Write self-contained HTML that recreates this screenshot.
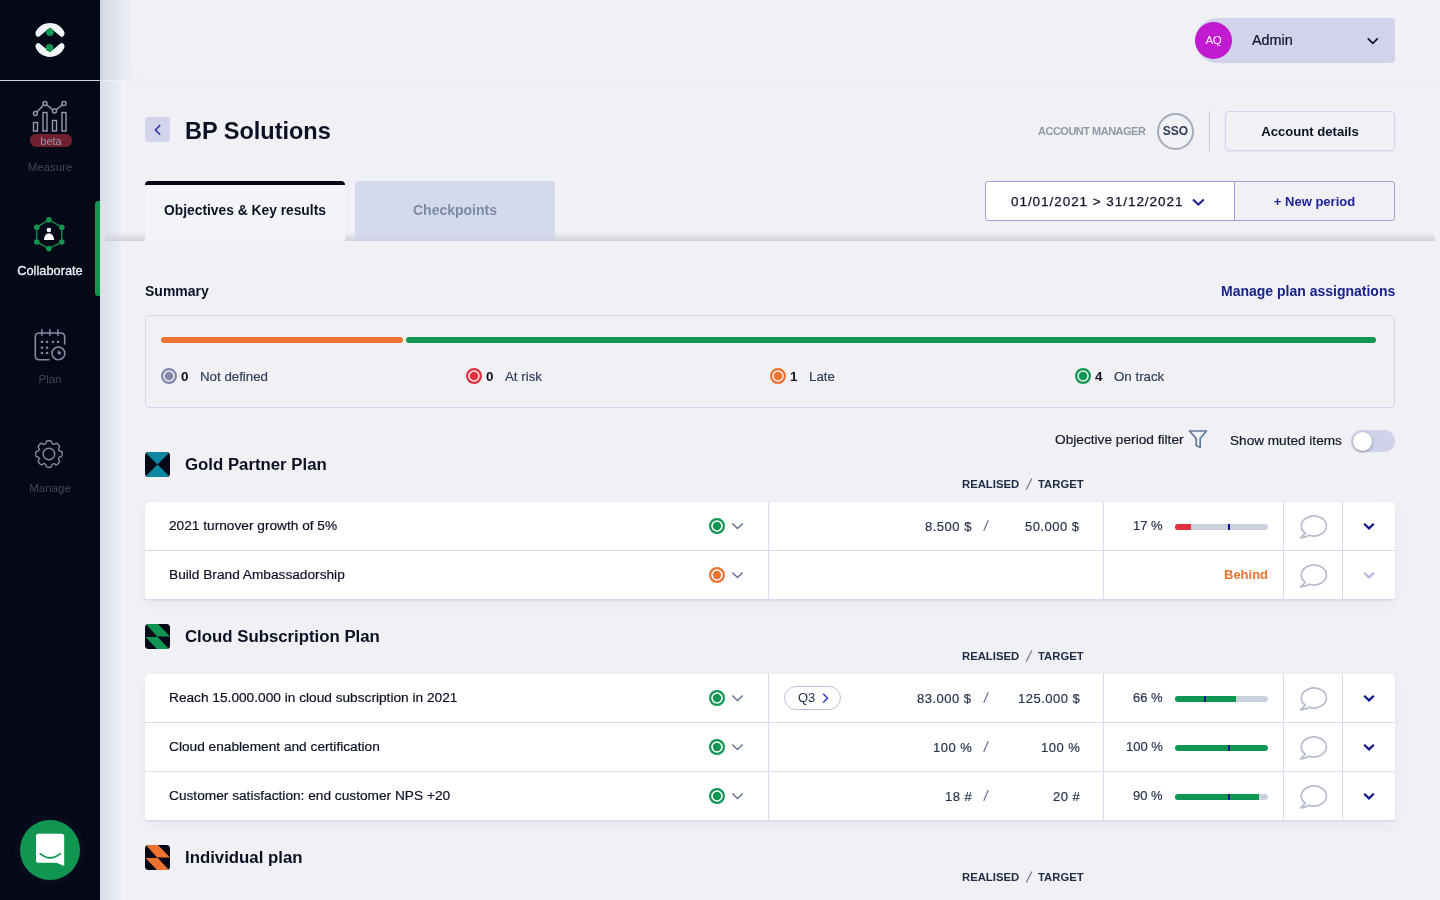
<!DOCTYPE html>
<html><head><meta charset="utf-8"><title>BP Solutions</title>
<style>
*{box-sizing:border-box;margin:0;padding:0}
html,body{width:1440px;height:900px;overflow:hidden;background:#f0f0f5;font-family:"Liberation Sans",sans-serif;color:#0b1024;-webkit-font-smoothing:antialiased}
.a,.navl{will-change:transform}
.a{position:absolute;white-space:nowrap;line-height:1}
#side{position:absolute;left:0;top:0;width:100px;height:900px;background:#050817}
#sideline{position:absolute;left:0;top:80px;width:100px;height:1px;background:#d2d0e6}
.navl{position:absolute;left:0;width:100px;text-align:center;font-size:11.5px;color:#42465e;line-height:1}
.m{-webkit-text-stroke:0.25px currentColor}
#lshadow{position:absolute;left:100px;top:81px;width:22px;height:819px;background:linear-gradient(to right,#d9dfe8 0,#dde2eb 4px,#e2e6ef 12px,#eaecf3 18px,#f0f0f5 22px)}
#lshadow2{position:absolute;left:100px;top:0;width:32px;height:80px;background:linear-gradient(to right,#cdd4e1 0,#d4dae4 3px,#dbe0e9 10px,#e2e6ee 18px,#e8ebf2 24px,#f0f0f5 32px)}
.box{position:absolute}
</style></head><body>
<div id="lshadow"></div><div id="lshadow2"></div>
<div id="side">
  <svg class="box" style="left:0;top:0" width="100" height="80" viewBox="0 0 100 80">
    <path d="M35.6 32.5 C37.5 27 43 22.9 50 22.9 C57 22.9 62.5 27 64.4 32.5 C65 34.5 63.5 36.8 61.7 36.8 C60.7 36.8 59.9 36 59.25 35.2 L50 27.8 L40.75 35.2 C40.1 36 39.3 36.8 38.3 36.8 C36.5 36.8 35 34.5 35.6 32.5 Z" fill="#f2f5f7"/>
    <path d="M35.6 32.5 C37.5 27 43 22.9 50 22.9 C57 22.9 62.5 27 64.4 32.5 C65 34.5 63.5 36.8 61.7 36.8 C60.7 36.8 59.9 36 59.25 35.2 L50 27.8 L40.75 35.2 C40.1 36 39.3 36.8 38.3 36.8 C36.5 36.8 35 34.5 35.6 32.5 Z" fill="#f2f5f7" transform="translate(0,79.8) scale(1,-1)"/>
    <circle cx="49.9" cy="32.2" r="3.8" fill="#119650"/>
    <circle cx="49.6" cy="47.7" r="3.8" fill="#119650"/>
  </svg>
  <div id="sideline"></div>
  <!-- Measure -->
  <svg class="box" style="left:0;top:95px" width="100" height="60" viewBox="0 95 100 60">
    <g fill="none" stroke="#9799ad" stroke-width="1.4">
      <rect x="33.5" y="122.5" width="4" height="8.5"/>
      <rect x="43" y="112.5" width="4" height="18.5"/>
      <rect x="52.5" y="120.5" width="4" height="10.5"/>
      <rect x="62" y="112.5" width="4" height="18.5"/>
      <polyline points="35.5,113.5 45,103.5 54.5,111 64,103.5"/>
      <circle cx="35.5" cy="113.5" r="2" fill="#050817"/>
      <circle cx="45" cy="103.5" r="2" fill="#050817"/>
      <circle cx="54.5" cy="111" r="2" fill="#050817"/>
      <circle cx="64" cy="103.5" r="2" fill="#050817"/>
    </g>
  </svg>
  <div class="box" style="left:29.8px;top:134.4px;width:42px;height:12.4px;border-radius:6.2px;background:#71202f"></div>
  <div class="a" style="left:1px;width:100px;text-align:center;top:136px;font-size:11px;color:#9498b0">beta</div>
  <div class="navl" style="top:162px">Measure</div>
  <!-- Collaborate -->
  <svg class="box" style="left:0;top:210px" width="100" height="50" viewBox="0 210 100 50">
    <polygon points="48.9,219.8 61.8,227.2 61.8,242 48.9,248.6 36.8,242 36.8,227.2" fill="none" stroke="#119650" stroke-width="1.3"/>
    <g fill="#119650">
      <circle cx="48.9" cy="219.8" r="2.8"/><circle cx="61.8" cy="227.2" r="2.8"/><circle cx="61.8" cy="242" r="2.8"/>
      <circle cx="48.9" cy="248.6" r="2.8"/><circle cx="36.8" cy="242" r="2.8"/><circle cx="36.8" cy="227.2" r="2.8"/>
    </g>
    <circle cx="48.9" cy="230" r="2.3" fill="#fff"/>
    <path d="M43.9 240 Q44.5 233.3 48.9 233.3 Q53.4 233.3 54.2 240 Z" fill="#fff"/>
  </svg>
  <div class="navl" style="top:265px;font-size:12.8px;color:#f0f1f5;-webkit-text-stroke:0.3px #f0f1f5">Collaborate</div>
  <div class="box" style="left:95px;top:201px;width:5px;height:95px;background:#119650;border-radius:3px 0 0 3px"></div>
  <!-- Plan -->
  <svg class="box" style="left:0;top:320px" width="100" height="50" viewBox="0 320 100 50">
    <g fill="none" stroke="#868aa2" stroke-width="1.6" stroke-linecap="round">
      <path d="M49 359.7 H39.3 Q35.3 359.7 35.3 355.7 V337 Q35.3 333 39.3 333 H60.7 Q64.7 333 64.7 337 V344"/>
      <line x1="41.9" y1="329.8" x2="41.9" y2="335.3"/>
      <line x1="49.9" y1="329.8" x2="49.9" y2="335.3"/>
      <line x1="58" y1="329.8" x2="58" y2="335.3"/>
      <circle cx="58.4" cy="353.4" r="6.4"/>
    </g>
    <g fill="#868aa2">
      <rect x="40.8" y="340.8" width="2.2" height="2.2"/><rect x="46" y="340.8" width="2.2" height="2.2"/><rect x="51.8" y="340.8" width="2.2" height="2.2"/><rect x="56.9" y="340.8" width="2.2" height="2.2"/>
      <rect x="40.8" y="346.6" width="2.2" height="2.2"/><rect x="46" y="346.6" width="2.2" height="2.2"/>
      <rect x="40.8" y="351.9" width="2.2" height="2.2"/><rect x="46" y="351.9" width="2.2" height="2.2"/>
      <path d="M57.6 350.7 A3.6 3.6 0 0 1 61.2 354.3 H57.6 Z"/>
    </g>
  </svg>
  <div class="navl" style="top:374px">Plan</div>
  <!-- Manage -->
  <svg class="box" style="left:20px;top:425px" width="60" height="60" viewBox="0 0 60 60">
    <g transform="translate(28.9,29)" fill="none" stroke="#868aa2" stroke-width="1.4" stroke-linejoin="round">
      <path d="M-3.96 -9.79 Q-3.13 -10.13 -2.97 -11.00 L-2.81 -11.83 Q-2.55 -13.26 -1.10 -13.26 L1.10 -13.26 Q2.55 -13.26 2.81 -11.83 L2.97 -11.00 Q3.13 -10.13 3.96 -9.79 L4.12 -9.72 Q4.95 -9.38 5.68 -9.88 L6.38 -10.36 Q7.57 -11.18 8.59 -10.15 L10.15 -8.59 Q11.18 -7.57 10.36 -6.38 L9.88 -5.68 Q9.38 -4.95 9.72 -4.12 L9.79 -3.96 Q10.13 -3.13 11.00 -2.97 L11.83 -2.81 Q13.26 -2.55 13.26 -1.10 L13.26 1.10 Q13.26 2.55 11.83 2.81 L11.00 2.97 Q10.13 3.13 9.79 3.96 L9.72 4.12 Q9.38 4.95 9.88 5.68 L10.36 6.38 Q11.18 7.57 10.15 8.59 L8.59 10.15 Q7.57 11.18 6.38 10.36 L5.68 9.88 Q4.95 9.38 4.12 9.72 L3.96 9.79 Q3.13 10.13 2.97 11.00 L2.81 11.83 Q2.55 13.26 1.10 13.26 L-1.10 13.26 Q-2.55 13.26 -2.81 11.83 L-2.97 11.00 Q-3.13 10.13 -3.96 9.79 L-4.12 9.72 Q-4.95 9.38 -5.68 9.88 L-6.38 10.36 Q-7.57 11.18 -8.59 10.15 L-10.15 8.59 Q-11.18 7.57 -10.36 6.38 L-9.88 5.68 Q-9.38 4.95 -9.72 4.12 L-9.79 3.96 Q-10.13 3.13 -11.00 2.97 L-11.83 2.81 Q-13.26 2.55 -13.26 1.10 L-13.26 -1.10 Q-13.26 -2.55 -11.83 -2.81 L-11.00 -2.97 Q-10.13 -3.13 -9.79 -3.96 L-9.72 -4.12 Q-9.38 -4.95 -9.88 -5.68 L-10.36 -6.38 Q-11.18 -7.57 -10.15 -8.59 L-8.59 -10.15 Q-7.57 -11.18 -6.38 -10.36 L-5.68 -9.88 Q-4.95 -9.38 -4.12 -9.72 Z"/>
      <circle r="5.8"/>
    </g>
  </svg>
  <div class="navl" style="top:483px">Manage</div>
  <!-- chat button -->
  <div class="box" style="left:14px;top:814px;width:72px;height:72px;border-radius:50%;background:radial-gradient(circle,#0a0d1e 60%,#050817 72%)"></div>
  <div class="box" style="left:20px;top:820px;width:60px;height:60px;border-radius:50%;background:#109651"></div>
  <svg class="box" style="left:20px;top:820px" width="60" height="60" viewBox="20 820 60 60">
    <path d="M38.5 833.8 H61.7 Q64.2 833.8 64.2 836.3 V866 L56.5 862.8 H38.5 Q36 862.8 36 860.3 V836.3 Q36 833.8 38.5 833.8Z" fill="#fff"/>
    <path d="M40.3 853.6 Q50.2 862 60.2 853.6" fill="none" stroke="#109651" stroke-width="1.8" stroke-linecap="round"/>
  </svg>
</div>

<!-- top header -->
<div class="box" style="left:128px;top:-12px;width:1330px;height:92px;border-radius:14px;box-shadow:-1px 1px 3px rgba(205,218,235,.55) inset"></div>
<div class="box" style="left:128px;top:80px;width:1312px;height:1px;background:#eaecf2"></div>
<div class="box" style="left:1195px;top:18px;width:200px;height:45px;background:#d2d3eb;border-radius:22.5px 4px 4px 22.5px"></div>
<div class="box" style="left:1195px;top:22px;width:37px;height:37px;border-radius:50%;background:#c11ad0"></div>
<div class="a" style="left:1195px;width:37px;text-align:center;top:35px;font-size:11.5px;color:#fff;letter-spacing:-0.2px">AQ</div>
<div class="a" style="left:1252px;top:33.2px;font-size:14.4px;color:#0b1024;-webkit-text-stroke:0.2px #0b1024">Admin</div>
<svg class="box" style="left:1365px;top:35px" width="16" height="12" viewBox="0 0 16 12"><path d="M2.8 3.3 L7.8 8.4 L12.8 3.3" fill="none" stroke="#0b1024" stroke-width="1.7"/></svg>

<!-- title row -->
<div class="box" style="left:145px;top:117px;width:25px;height:25px;background:#d3d4ec;border-radius:3px"></div>
<svg class="box" style="left:145px;top:117px" width="25" height="25" viewBox="0 0 25 25"><path d="M15.2 8.1 L10.4 12.9 L15.2 17.7" fill="none" stroke="#2b35b5" stroke-width="1.5"/></svg>
<div class="a" style="left:185px;top:120.1px;font-size:23.5px;font-weight:700;color:#0b1024">BP Solutions</div>
<div class="a" style="left:1038px;top:125.6px;font-size:11px;color:#8f98aa;letter-spacing:-0.5px;font-weight:700">ACCOUNT MANAGER</div>
<div class="box" style="left:1157px;top:113px;width:37px;height:37px;border-radius:50%;border:2px solid #a3acbd"></div>
<div class="a" style="left:1157px;width:37px;text-align:center;top:125.4px;font-size:12px;font-weight:700;color:#2c3a58">SSO</div>
<div class="box" style="left:1209px;top:111px;width:1px;height:40px;background:#c9ccd6"></div>
<div class="box" style="left:1225px;top:111px;width:170px;height:40px;border:1px solid #d0d3ee;border-radius:4px;box-shadow:0 1px 2px rgba(20,20,60,.06)"></div>
<div class="a" style="left:1225px;width:170px;text-align:center;top:125.2px;font-size:13.1px;font-weight:700;color:#0b1024">Account details</div>

<!-- tabs -->
<div class="box" style="left:105px;top:232px;width:1330px;height:9px;background:linear-gradient(to bottom,rgba(200,200,210,0),rgba(205,205,214,.9))"></div>
<div class="box" style="left:145px;top:181px;width:200px;height:60px;background:#f3f4f8;border-top:4px solid #050817;border-radius:4px 4px 0 0"></div>
<div class="a" style="left:145px;width:200px;text-align:center;top:204.4px;font-size:13.8px;font-weight:700;color:#0b1024">Objectives &amp; Key results</div>
<div class="box" style="left:355px;top:181px;width:200px;height:60px;background:#d5d9ec;border-radius:4px 4px 0 0"></div>
<div class="box" style="left:355px;top:234px;width:200px;height:7px;background:linear-gradient(to bottom,rgba(200,200,230,0),rgba(205,205,235,.8))"></div>
<div class="a" style="left:355px;width:200px;text-align:center;top:203.2px;font-size:14px;font-weight:700;color:#7b8ba5">Checkpoints</div>

<div class="box" style="left:985px;top:181px;width:250px;height:40px;background:#fff;border:1px solid #9fa3d6;border-radius:3px 0 0 3px"></div>
<div class="a" style="left:1011px;top:194.8px;font-size:13.5px;color:#0f1429;letter-spacing:0.95px;-webkit-text-stroke:0.25px #0f1429">01/01/2021 &gt; 31/12/2021</div>
<svg class="box" style="left:1190px;top:196px" width="16" height="12" viewBox="0 0 16 12"><path d="M3 3.5 L8.4 8.6 L13.8 3.5" fill="none" stroke="#1d1f99" stroke-width="2.1"/></svg>
<div class="box" style="left:1234px;top:181px;width:161px;height:40px;border:1px solid #9fa3d6;border-radius:0 3px 3px 0"></div>
<div class="a" style="left:1234px;width:161px;text-align:center;top:195.2px;font-size:13px;font-weight:700;color:#1d2399">+ New period</div>

<!-- summary -->
<div class="a" style="left:145px;top:284.2px;font-size:14px;font-weight:700;color:#0b1024">Summary</div>
<div class="a" style="right:45px;top:284.2px;font-size:14px;font-weight:700;color:#1a2190">Manage plan assignations</div>
<div class="box" style="left:145px;top:315px;width:1250px;height:93px;border:1px solid #d3d6ec;border-radius:4px"></div>
<div class="box" style="left:161px;top:337px;width:242px;height:6px;background:#ee7330;border-radius:3px"></div>
<div class="box" style="left:406px;top:337px;width:970px;height:6px;background:#109651;border-radius:3px"></div>
<svg class="box" style="left:161px;top:368px" width="16" height="16" viewBox="0 0 16 16"><circle cx="8" cy="8" r="6.9" fill="none" stroke="#8486a8" stroke-width="2.2"/><circle cx="8" cy="8" r="4.3" fill="#8486a8"/></svg>
<div class="a" style="left:181px;top:369.8px;font-size:13.4px;font-weight:700;color:#0b1024">0</div>
<div class="a" style="left:200px;top:369.8px;font-size:13.3px;color:#2f3e5c;-webkit-text-stroke:0.2px #2f3e5c">Not defined</div>
<svg class="box" style="left:466px;top:368px" width="16" height="16" viewBox="0 0 16 16"><circle cx="8" cy="8" r="6.9" fill="none" stroke="#e3303f" stroke-width="2.2"/><circle cx="8" cy="8" r="4.3" fill="#e3303f"/></svg>
<div class="a" style="left:486px;top:369.8px;font-size:13.4px;font-weight:700;color:#0b1024">0</div>
<div class="a" style="left:505px;top:369.8px;font-size:13.3px;color:#2f3e5c;-webkit-text-stroke:0.2px #2f3e5c">At risk</div>
<svg class="box" style="left:770px;top:368px" width="16" height="16" viewBox="0 0 16 16"><circle cx="8" cy="8" r="6.9" fill="none" stroke="#ee7330" stroke-width="2.2"/><circle cx="8" cy="8" r="4.3" fill="#ee7330"/></svg>
<div class="a" style="left:790px;top:369.8px;font-size:13.4px;font-weight:700;color:#0b1024">1</div>
<div class="a" style="left:809px;top:369.8px;font-size:13.3px;color:#2f3e5c;-webkit-text-stroke:0.2px #2f3e5c">Late</div>
<svg class="box" style="left:1075px;top:368px" width="16" height="16" viewBox="0 0 16 16"><circle cx="8" cy="8" r="6.9" fill="none" stroke="#109651" stroke-width="2.2"/><circle cx="8" cy="8" r="4.3" fill="#109651"/></svg>
<div class="a" style="left:1095px;top:369.8px;font-size:13.4px;font-weight:700;color:#0b1024">4</div>
<div class="a" style="left:1114px;top:369.8px;font-size:13.3px;color:#2f3e5c;-webkit-text-stroke:0.2px #2f3e5c">On track</div>

<!-- filter row -->
<div class="a" style="left:1055px;top:433px;font-size:13.7px;color:#111a2c;-webkit-text-stroke:0.2px #111a2c">Objective period filter</div>
<svg class="box" style="left:1186px;top:428px" width="24" height="22" viewBox="0 0 24 22"><path d="M3.5 3 H20.5 L14.2 10.5 V19.5 L10.2 17.5 V10.5 Z" fill="none" stroke="#637b9b" stroke-width="1.7" stroke-linejoin="round"/></svg>
<div class="a" style="left:1230px;top:434px;font-size:13.6px;color:#111a2c;-webkit-text-stroke:0.2px #111a2c">Show muted items</div>
<div class="box" style="left:1351px;top:430px;width:44px;height:22px;border-radius:11px;background:#d0d2ea"></div>
<div class="box" style="left:1352.5px;top:431.5px;width:19px;height:19px;border-radius:50%;background:#fff;box-shadow:0 1px 3px rgba(30,40,70,.45)"></div>
<svg class="box" style="left:145px;top:452px" width="25" height="25" viewBox="0 0 25 25"><defs><clipPath id="c452"><rect width="25" height="25" rx="3.5"/></clipPath></defs><g clip-path="url(#c452)"><rect width="25" height="25" fill="#060918"/><polygon points="0,0 25,0 12.5,12.5" fill="#0e87a3"/><polygon points="0,25 25,25 12.5,12.5" fill="#0e87a3"/></g></svg><div class="a" style="left:185px;top:456.8px;font-size:16.8px;font-weight:700;color:#0b1024">Gold Partner Plan</div><div class="a" style="left:962px;top:478.9px;font-size:11.3px;font-weight:700;color:#1f2b45">REALISED</div><svg class="box" style="left:1024px;top:475.0px" width="10" height="16" viewBox="0 0 10 16"><line x1="2.4" y1="14.3" x2="7.6" y2="4" stroke="#6b7891" stroke-width="1.2" stroke-linecap="round"/></svg><div class="a" style="left:1038px;top:478.9px;font-size:11.3px;font-weight:700;color:#1f2b45">TARGET</div><div class="box" style="left:145px;top:502px;width:1250px;height:98px;background:#fff;border-radius:4px;box-shadow:0 1px 2px rgba(40,40,90,.06),0 4px 14px rgba(40,40,90,.045)"></div><div class="box" style="left:145px;top:550px;width:1250px;height:1px;background:#d7daf0"></div><div class="a" style="left:169px;top:518.7px;font-size:13.7px;color:#0b1024;-webkit-text-stroke:0.2px #0b1024">2021 turnover growth of 5%</div><svg class="box" style="left:709px;top:518px" width="16" height="16" viewBox="0 0 16 16"><circle cx="8" cy="8" r="6.9" fill="none" stroke="#109651" stroke-width="2.2"/><circle cx="8" cy="8" r="4.2" fill="#109651"/></svg><svg class="box" style="left:730px;top:520px" width="15" height="12" viewBox="0 0 15 12"><path d="M2.3 3.4 L7.5 8.6 L12.7 3.4" fill="none" stroke="#60728f" stroke-width="1.4"/></svg><div class="a" style="right:468.5px;top:519.8px;font-size:13px;color:#27344f;letter-spacing:0.5px;margin-right:-0.5px;-webkit-text-stroke:0.2px #27344f">8.500 $</div><svg class="box" style="left:981px;top:518.0px" width="10" height="16" viewBox="0 0 10 16"><line x1="2.9" y1="12.4" x2="7.1" y2="2.5" stroke="#67748d" stroke-width="1.2" stroke-linecap="round"/></svg><div class="a" style="right:360.5px;top:519.8px;font-size:13px;color:#27344f;letter-spacing:0.5px;margin-right:-0.5px;-webkit-text-stroke:0.2px #27344f">50.000 $</div><div class="a" style="right:277.5px;top:519px;font-size:13px;color:#27344f;-webkit-text-stroke:0.2px #27344f">17 %</div><div class="box" style="left:1175px;top:524px;width:93px;height:6px;border-radius:3px;background:#cad1de;overflow:hidden"><div style="width:15.8px;height:6px;background:#e3303f"></div><div style="position:absolute;left:53px;top:0;width:2px;height:6px;background:#0c148a"></div></div><svg class="box" style="left:1296px;top:513px" width="34" height="30" viewBox="0 0 34 30"><path d="M9.3 20.3 L4.5 24.9 C7.8 24.7 10.6 23.7 13 22.2 A12.55 10 0 1 0 9.3 20.3 Z" fill="none" stroke="#b6bdcd" stroke-width="1.7" stroke-linejoin="round"/></svg><svg class="box" style="left:1361px;top:519px" width="16" height="14" viewBox="0 0 16 14"><path d="M3.2 4.8 L8 9.4 L12.8 4.8" fill="none" stroke="#10168a" stroke-width="2.2"/></svg><div class="box" style="left:145px;top:599px;width:1250px;height:1px;background:#d7daf0"></div><div class="a" style="left:169px;top:567.7px;font-size:13.7px;color:#0b1024;-webkit-text-stroke:0.2px #0b1024">Build Brand Ambassadorship</div><svg class="box" style="left:709px;top:567px" width="16" height="16" viewBox="0 0 16 16"><circle cx="8" cy="8" r="6.9" fill="none" stroke="#ee7330" stroke-width="2.2"/><circle cx="8" cy="8" r="4.2" fill="#ee7330"/></svg><svg class="box" style="left:730px;top:569px" width="15" height="12" viewBox="0 0 15 12"><path d="M2.3 3.4 L7.5 8.6 L12.7 3.4" fill="none" stroke="#60728f" stroke-width="1.4"/></svg><div class="a" style="right:172px;top:567.6px;font-size:13px;font-weight:700;color:#ee7330">Behind</div><svg class="box" style="left:1296px;top:562px" width="34" height="30" viewBox="0 0 34 30"><path d="M9.3 20.3 L4.5 24.9 C7.8 24.7 10.6 23.7 13 22.2 A12.55 10 0 1 0 9.3 20.3 Z" fill="none" stroke="#b6bdcd" stroke-width="1.7" stroke-linejoin="round"/></svg><svg class="box" style="left:1361px;top:568px" width="16" height="14" viewBox="0 0 16 14"><path d="M3.2 4.8 L8 9.4 L12.8 4.8" fill="none" stroke="#b3b6e6" stroke-width="2.2"/></svg><div class="box" style="left:768px;top:502px;width:1px;height:98px;background:#d7daf0"></div><div class="box" style="left:1103px;top:502px;width:1px;height:98px;background:#d7daf0"></div><div class="box" style="left:1283px;top:502px;width:1px;height:98px;background:#d7daf0"></div><div class="box" style="left:1342px;top:502px;width:1px;height:98px;background:#d7daf0"></div><svg class="box" style="left:145px;top:624px" width="25" height="25" viewBox="0 0 25 25"><defs><clipPath id="c624"><rect width="25" height="25" rx="3.5"/></clipPath></defs><g clip-path="url(#c624)"><rect width="25" height="25" fill="#060918"/><polygon points="1,0 13,0 25,12.5 12,12.5" fill="#109651"/><polygon points="0.5,13 12.8,13 24,25 12,25" fill="#109651"/></g></svg><div class="a" style="left:185px;top:628.8px;font-size:16.8px;font-weight:700;color:#0b1024">Cloud Subscription Plan</div><div class="a" style="left:962px;top:650.9px;font-size:11.3px;font-weight:700;color:#1f2b45">REALISED</div><svg class="box" style="left:1024px;top:647.0px" width="10" height="16" viewBox="0 0 10 16"><line x1="2.4" y1="14.3" x2="7.6" y2="4" stroke="#6b7891" stroke-width="1.2" stroke-linecap="round"/></svg><div class="a" style="left:1038px;top:650.9px;font-size:11.3px;font-weight:700;color:#1f2b45">TARGET</div><div class="box" style="left:145px;top:674px;width:1250px;height:147px;background:#fff;border-radius:4px;box-shadow:0 1px 2px rgba(40,40,90,.06),0 4px 14px rgba(40,40,90,.045)"></div><div class="box" style="left:145px;top:722px;width:1250px;height:1px;background:#d7daf0"></div><div class="a" style="left:169px;top:690.7px;font-size:13.7px;color:#0b1024;-webkit-text-stroke:0.2px #0b1024">Reach 15.000.000 in cloud subscription in 2021</div><svg class="box" style="left:709px;top:690px" width="16" height="16" viewBox="0 0 16 16"><circle cx="8" cy="8" r="6.9" fill="none" stroke="#109651" stroke-width="2.2"/><circle cx="8" cy="8" r="4.2" fill="#109651"/></svg><svg class="box" style="left:730px;top:692px" width="15" height="12" viewBox="0 0 15 12"><path d="M2.3 3.4 L7.5 8.6 L12.7 3.4" fill="none" stroke="#60728f" stroke-width="1.4"/></svg><div class="box" style="left:784px;top:686px;width:57px;height:24px;border:1px solid #bbbfe0;border-radius:12px"></div><div class="a" style="left:797.5px;top:691.4px;font-size:13px;color:#1f2b45">Q3</div><svg class="box" style="left:820px;top:692px" width="12" height="12" viewBox="0 0 12 12"><path d="M3.2 1.8 L7.6 6.2 L3.2 10.6" fill="none" stroke="#2a35b8" stroke-width="1.4"/></svg><div class="a" style="right:468.5px;top:691.8px;font-size:13px;color:#27344f;letter-spacing:0.5px;margin-right:-0.5px;-webkit-text-stroke:0.2px #27344f">83.000 $</div><svg class="box" style="left:981px;top:690.0px" width="10" height="16" viewBox="0 0 10 16"><line x1="2.9" y1="12.4" x2="7.1" y2="2.5" stroke="#67748d" stroke-width="1.2" stroke-linecap="round"/></svg><div class="a" style="right:360.5px;top:691.8px;font-size:13px;color:#27344f;letter-spacing:0.5px;margin-right:-0.5px;-webkit-text-stroke:0.2px #27344f">125.000 $</div><div class="a" style="right:277.5px;top:691px;font-size:13px;color:#27344f;-webkit-text-stroke:0.2px #27344f">66 %</div><div class="box" style="left:1175px;top:696px;width:93px;height:6px;border-radius:3px;background:#cad1de;overflow:hidden"><div style="width:61.4px;height:6px;background:#109651"></div><div style="position:absolute;left:29px;top:0;width:2px;height:6px;background:#0c148a"></div></div><svg class="box" style="left:1296px;top:685px" width="34" height="30" viewBox="0 0 34 30"><path d="M9.3 20.3 L4.5 24.9 C7.8 24.7 10.6 23.7 13 22.2 A12.55 10 0 1 0 9.3 20.3 Z" fill="none" stroke="#b6bdcd" stroke-width="1.7" stroke-linejoin="round"/></svg><svg class="box" style="left:1361px;top:691px" width="16" height="14" viewBox="0 0 16 14"><path d="M3.2 4.8 L8 9.4 L12.8 4.8" fill="none" stroke="#10168a" stroke-width="2.2"/></svg><div class="box" style="left:145px;top:771px;width:1250px;height:1px;background:#d7daf0"></div><div class="a" style="left:169px;top:739.7px;font-size:13.7px;color:#0b1024;-webkit-text-stroke:0.2px #0b1024">Cloud enablement and certification</div><svg class="box" style="left:709px;top:739px" width="16" height="16" viewBox="0 0 16 16"><circle cx="8" cy="8" r="6.9" fill="none" stroke="#109651" stroke-width="2.2"/><circle cx="8" cy="8" r="4.2" fill="#109651"/></svg><svg class="box" style="left:730px;top:741px" width="15" height="12" viewBox="0 0 15 12"><path d="M2.3 3.4 L7.5 8.6 L12.7 3.4" fill="none" stroke="#60728f" stroke-width="1.4"/></svg><div class="a" style="right:468.5px;top:740.8px;font-size:13px;color:#27344f;letter-spacing:0.5px;margin-right:-0.5px;-webkit-text-stroke:0.2px #27344f">100 %</div><svg class="box" style="left:981px;top:739.0px" width="10" height="16" viewBox="0 0 10 16"><line x1="2.9" y1="12.4" x2="7.1" y2="2.5" stroke="#67748d" stroke-width="1.2" stroke-linecap="round"/></svg><div class="a" style="right:360.5px;top:740.8px;font-size:13px;color:#27344f;letter-spacing:0.5px;margin-right:-0.5px;-webkit-text-stroke:0.2px #27344f">100 %</div><div class="a" style="right:277.5px;top:740px;font-size:13px;color:#27344f;-webkit-text-stroke:0.2px #27344f">100 %</div><div class="box" style="left:1175px;top:745px;width:93px;height:6px;border-radius:3px;background:#cad1de;overflow:hidden"><div style="width:93.0px;height:6px;background:#109651"></div><div style="position:absolute;left:53px;top:0;width:2px;height:6px;background:#0c148a"></div></div><svg class="box" style="left:1296px;top:734px" width="34" height="30" viewBox="0 0 34 30"><path d="M9.3 20.3 L4.5 24.9 C7.8 24.7 10.6 23.7 13 22.2 A12.55 10 0 1 0 9.3 20.3 Z" fill="none" stroke="#b6bdcd" stroke-width="1.7" stroke-linejoin="round"/></svg><svg class="box" style="left:1361px;top:740px" width="16" height="14" viewBox="0 0 16 14"><path d="M3.2 4.8 L8 9.4 L12.8 4.8" fill="none" stroke="#10168a" stroke-width="2.2"/></svg><div class="box" style="left:145px;top:820px;width:1250px;height:1px;background:#d7daf0"></div><div class="a" style="left:169px;top:788.7px;font-size:13.7px;color:#0b1024;-webkit-text-stroke:0.2px #0b1024">Customer satisfaction: end customer NPS +20</div><svg class="box" style="left:709px;top:788px" width="16" height="16" viewBox="0 0 16 16"><circle cx="8" cy="8" r="6.9" fill="none" stroke="#109651" stroke-width="2.2"/><circle cx="8" cy="8" r="4.2" fill="#109651"/></svg><svg class="box" style="left:730px;top:790px" width="15" height="12" viewBox="0 0 15 12"><path d="M2.3 3.4 L7.5 8.6 L12.7 3.4" fill="none" stroke="#60728f" stroke-width="1.4"/></svg><div class="a" style="right:468.5px;top:789.8px;font-size:13px;color:#27344f;letter-spacing:0.5px;margin-right:-0.5px;-webkit-text-stroke:0.2px #27344f">18 #</div><svg class="box" style="left:981px;top:788.0px" width="10" height="16" viewBox="0 0 10 16"><line x1="2.9" y1="12.4" x2="7.1" y2="2.5" stroke="#67748d" stroke-width="1.2" stroke-linecap="round"/></svg><div class="a" style="right:360.5px;top:789.8px;font-size:13px;color:#27344f;letter-spacing:0.5px;margin-right:-0.5px;-webkit-text-stroke:0.2px #27344f">20 #</div><div class="a" style="right:277.5px;top:789px;font-size:13px;color:#27344f;-webkit-text-stroke:0.2px #27344f">90 %</div><div class="box" style="left:1175px;top:794px;width:93px;height:6px;border-radius:3px;background:#cad1de;overflow:hidden"><div style="width:83.7px;height:6px;background:#109651"></div><div style="position:absolute;left:53px;top:0;width:2px;height:6px;background:#0c148a"></div></div><svg class="box" style="left:1296px;top:783px" width="34" height="30" viewBox="0 0 34 30"><path d="M9.3 20.3 L4.5 24.9 C7.8 24.7 10.6 23.7 13 22.2 A12.55 10 0 1 0 9.3 20.3 Z" fill="none" stroke="#b6bdcd" stroke-width="1.7" stroke-linejoin="round"/></svg><svg class="box" style="left:1361px;top:789px" width="16" height="14" viewBox="0 0 16 14"><path d="M3.2 4.8 L8 9.4 L12.8 4.8" fill="none" stroke="#10168a" stroke-width="2.2"/></svg><div class="box" style="left:768px;top:674px;width:1px;height:147px;background:#d7daf0"></div><div class="box" style="left:1103px;top:674px;width:1px;height:147px;background:#d7daf0"></div><div class="box" style="left:1283px;top:674px;width:1px;height:147px;background:#d7daf0"></div><div class="box" style="left:1342px;top:674px;width:1px;height:147px;background:#d7daf0"></div><svg class="box" style="left:145px;top:845px" width="25" height="25" viewBox="0 0 25 25"><defs><clipPath id="c845"><rect width="25" height="25" rx="3.5"/></clipPath></defs><g clip-path="url(#c845)"><rect width="25" height="25" fill="#060918"/><polygon points="1,0 13,0 25,12.5 12,12.5" fill="#ee7330"/><polygon points="0.5,13 12.8,13 24,25 12,25" fill="#ee7330"/></g></svg><div class="a" style="left:185px;top:849.8px;font-size:16.8px;font-weight:700;color:#0b1024">Individual plan</div><div class="a" style="left:962px;top:871.9px;font-size:11.3px;font-weight:700;color:#1f2b45">REALISED</div><svg class="box" style="left:1024px;top:868.0px" width="10" height="16" viewBox="0 0 10 16"><line x1="2.4" y1="14.3" x2="7.6" y2="4" stroke="#6b7891" stroke-width="1.2" stroke-linecap="round"/></svg><div class="a" style="left:1038px;top:871.9px;font-size:11.3px;font-weight:700;color:#1f2b45">TARGET</div><div class="box" style="left:145px;top:895px;width:1250px;height:0px;background:#fff;border-radius:4px;box-shadow:0 1px 2px rgba(40,40,90,.06),0 4px 14px rgba(40,40,90,.045)"></div><div class="box" style="left:768px;top:895px;width:1px;height:0px;background:#d7daf0"></div><div class="box" style="left:1103px;top:895px;width:1px;height:0px;background:#d7daf0"></div><div class="box" style="left:1283px;top:895px;width:1px;height:0px;background:#d7daf0"></div><div class="box" style="left:1342px;top:895px;width:1px;height:0px;background:#d7daf0"></div></body></html>
